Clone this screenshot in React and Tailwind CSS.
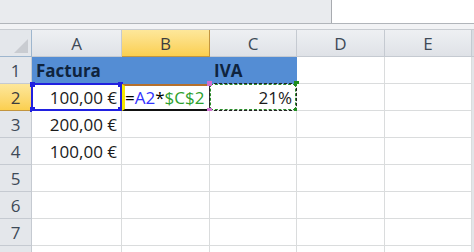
import React from "react";

const cols = [
  { k: "A", w: "w-[90px]" },
  { k: "B", w: "w-[88px]" },
  { k: "C", w: "w-[87px]" },
  { k: "D", w: "w-[88px]" },
  { k: "E", w: "w-[87px]" },
];

const data = {
  1: { A: { t: "Factura", b: true, fill: true }, B: { fill: true }, C: { t: "IVA", b: true, fill: true } },
  2: { A: { t: "100,00 €", r: true }, C: { t: "21%", r: true } },
  3: { A: { t: "200,00 €", r: true } },
  4: { A: { t: "100,00 €", r: true } },
};

function Corner({ pos, color }) {
  return <div className={`absolute ${pos} w-[5px] h-[5px] ${color}`} />;
}

function Cell({ row, col }) {
  const d = (data[row] && data[row][col.k]) || {};
  const fill = d.fill ? "bg-[#548dd4] border-[#548dd4]" : "bg-white border-[#dadcdd]";
  return (
    <div
      className={`${col.w} h-[27px] shrink-0 border-r border-b ${fill} flex items-center px-[4px] ${
        d.r ? "justify-end" : "justify-start"
      } ${d.b ? "font-bold text-[#0f243e]" : "text-[#1a1a1a]"} relative`}
    >
      {row === 2 && col.k === "B" ? (
        <span className="-ml-[1px]">
          <span className="text-black">=</span>
          <span className="text-[#3232ff]">A2</span>
          <span className="text-black">*</span>
          <span className="text-[#2ea02e]">$C$2</span>
        </span>
      ) : (
        d.t
      )}
      {row === 2 && col.k === "A" && (
        <div className="absolute -left-[1px] -top-[1px] w-[91px] h-[28px] border-2 border-[#2020e0]">
          <Corner pos="-left-[3px] -top-[3px]" color="bg-[#2020e0]" />
          <Corner pos="-right-[3px] -top-[3px]" color="bg-[#2020e0]" />
          <Corner pos="-left-[3px] -bottom-[3px]" color="bg-[#2020e0]" />
          <Corner pos="-right-[3px] -bottom-[3px]" color="bg-[#2020e0]" />
        </div>
      )}
      {row === 2 && col.k === "B" && (
        <div className="absolute inset-0 -bottom-[1px] -right-[1px] border-t-2 border-t-[#b5702e] border-b-2 border-b-[#111] border-l-[3px] border-l-[#f5e800] border-r border-r-[#333]" />
      )}
      {row === 2 && col.k === "C" && (
        <div className="absolute -left-[1px] -top-[1px] w-[88px] h-[28px] border border-dashed border-[#222] outline outline-1 outline-dashed outline-offset-[-2px] outline-[#2a8a2a]">
          <Corner pos="-left-[3px] -top-[3px]" color="bg-[#d070d0]" />
          <Corner pos="-right-[3px] -top-[3px]" color="bg-[#1e8c1e]" />
          <Corner pos="-left-[3px] -bottom-[3px]" color="bg-[#d070d0]" />
          <Corner pos="-right-[3px] -bottom-[3px]" color="bg-[#1e8c1e]" />
        </div>
      )}
    </div>
  );
}

export default function App() {
  const rows = [1, 2, 3, 4, 5, 6, 7, 8];
  return (
    <div
      className="w-[474px] h-[252px] overflow-hidden bg-white text-[17px] leading-none"
      style={{ fontFamily: '"Open Sans", "Liberation Sans", sans-serif' }}
    >
      {/* top bar */}
      <div className="flex h-[24px] border-b border-[#b1b5ba]">
        <div className="w-[332px] h-full bg-[#e9ebee] border-r border-[#a8abb0]" />
        <div className="flex-1 bg-white" />
      </div>
      <div className="h-[6px] bg-[#f2f3f5] border-b border-[#c8ccd1]" />
      {/* header row */}
      <div className="flex h-[27px]">
        <div className="w-[32px] h-full shrink-0 bg-[#e4e7eb] border-r border-b border-[#9eb6ce] flex items-end justify-end p-[3px]">
          <svg width="14" height="14" viewBox="0 0 14 14">
            <polygon points="14,0 14,14 0,14" fill="#c9ccd1" />
          </svg>
        </div>
        {cols.map((c) => (
          <div
            key={c.k}
            className={`${c.w} h-full shrink-0 flex items-center justify-center border-r border-b ${
              c.k === "B"
                ? "bg-gradient-to-b from-[#fde79a] to-[#fbcf4e] border-[#c2953f] text-[#3d3d3d]"
                : "bg-gradient-to-b from-[#eef0f3] to-[#dfe2e7] border-[#c5cad1] text-[#3e4a57]"
            }`}
          >
            {c.k}
          </div>
        ))}
        <div className="flex-1 bg-[#d9dce1] border-b border-[#c5cad1]" />
      </div>
      {rows.map((r) => (
        <div key={r} className="flex h-[27px]">
          <div
            className={`w-[32px] h-full shrink-0 flex items-center justify-center border-r border-b ${
              r === 2
                ? "bg-gradient-to-b from-[#fde79a] to-[#fbcf4e] border-[#c2953f] text-[#3d3d3d]"
                : "bg-[#e4e7eb] border-[#c5cad1] text-[#3e4a57]"
            }`}
          >
            {r < 8 ? r : ""}
          </div>
          {cols.map((c) => (
            <Cell key={c.k} row={r} col={c} />
          ))}
          <div className="flex-1 bg-[#e3e5e8]" />
        </div>
      ))}
    </div>
  );
}
